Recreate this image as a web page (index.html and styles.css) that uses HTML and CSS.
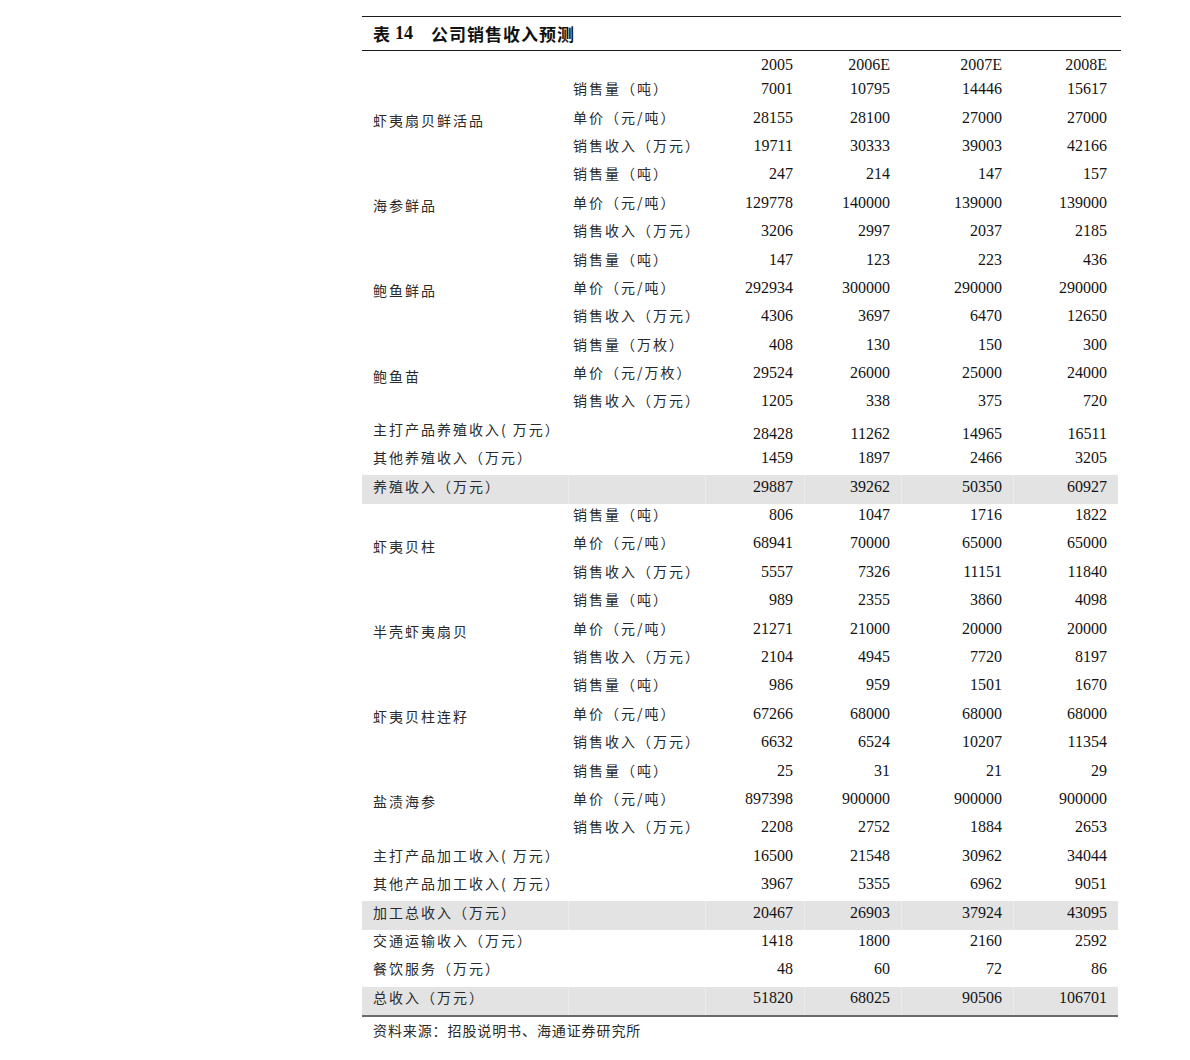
FILE: index.html
```html
<!DOCTYPE html>
<html lang="zh">
<head>
<meta charset="utf-8">
<title>表14 公司销售收入预测</title>
<link rel="stylesheet" href="styles.css">
</head>
<body>
<div class="page">
  <div class="title"><span class="t-cn">表</span><span class="t-num">14</span><span class="t-cn t-main">公司销售收入预测</span></div>
  <div class="grid">
    <div class="c hd"></div><div class="c hd"></div>
    <div class="c n hd">2005</div><div class="c n hd">2006E</div><div class="c n hd">2007E</div><div class="c n hd">2008E</div>

    <div class="c g">虾夷扇贝鲜活品</div>
    <div class="c l2">销售量（吨）</div><div class="c n">7001</div><div class="c n">10795</div><div class="c n">14446</div><div class="c n">15617</div>
    <div class="c l2">单价（元/吨）</div><div class="c n">28155</div><div class="c n">28100</div><div class="c n">27000</div><div class="c n">27000</div>
    <div class="c l2">销售收入（万元）</div><div class="c n">19711</div><div class="c n">30333</div><div class="c n">39003</div><div class="c n">42166</div>

    <div class="c g">海参鲜品</div>
    <div class="c l2">销售量（吨）</div><div class="c n">247</div><div class="c n">214</div><div class="c n">147</div><div class="c n">157</div>
    <div class="c l2">单价（元/吨）</div><div class="c n">129778</div><div class="c n">140000</div><div class="c n">139000</div><div class="c n">139000</div>
    <div class="c l2">销售收入（万元）</div><div class="c n">3206</div><div class="c n">2997</div><div class="c n">2037</div><div class="c n">2185</div>

    <div class="c g">鲍鱼鲜品</div>
    <div class="c l2">销售量（吨）</div><div class="c n">147</div><div class="c n">123</div><div class="c n">223</div><div class="c n">436</div>
    <div class="c l2">单价（元/吨）</div><div class="c n">292934</div><div class="c n">300000</div><div class="c n">290000</div><div class="c n">290000</div>
    <div class="c l2">销售收入（万元）</div><div class="c n">4306</div><div class="c n">3697</div><div class="c n">6470</div><div class="c n">12650</div>

    <div class="c g">鲍鱼苗</div>
    <div class="c l2">销售量（万枚）</div><div class="c n">408</div><div class="c n">130</div><div class="c n">150</div><div class="c n">300</div>
    <div class="c l2">单价（元/万枚）</div><div class="c n">29524</div><div class="c n">26000</div><div class="c n">25000</div><div class="c n">24000</div>
    <div class="c l2">销售收入（万元）</div><div class="c n">1205</div><div class="c n">338</div><div class="c n">375</div><div class="c n">720</div>

    <div class="c l1">主打产品养殖收入( 万元）</div><div class="c"></div><div class="c n low">28428</div><div class="c n low">11262</div><div class="c n low">14965</div><div class="c n low">16511</div>
    <div class="c l1">其他养殖收入（万元）</div><div class="c"></div><div class="c n">1459</div><div class="c n">1897</div><div class="c n">2466</div><div class="c n">3205</div>
    <div class="c l1 sh">养殖收入（万元）</div><div class="c sh box"></div><div class="c n sh box">29887</div><div class="c n sh box">39262</div><div class="c n sh box">50350</div><div class="c n sh box">60927</div>

    <div class="c g">虾夷贝柱</div>
    <div class="c l2">销售量（吨）</div><div class="c n">806</div><div class="c n">1047</div><div class="c n">1716</div><div class="c n">1822</div>
    <div class="c l2">单价（元/吨）</div><div class="c n">68941</div><div class="c n">70000</div><div class="c n">65000</div><div class="c n">65000</div>
    <div class="c l2">销售收入（万元）</div><div class="c n">5557</div><div class="c n">7326</div><div class="c n">11151</div><div class="c n">11840</div>

    <div class="c g">半壳虾夷扇贝</div>
    <div class="c l2">销售量（吨）</div><div class="c n">989</div><div class="c n">2355</div><div class="c n">3860</div><div class="c n">4098</div>
    <div class="c l2">单价（元/吨）</div><div class="c n">21271</div><div class="c n">21000</div><div class="c n">20000</div><div class="c n">20000</div>
    <div class="c l2">销售收入（万元）</div><div class="c n">2104</div><div class="c n">4945</div><div class="c n">7720</div><div class="c n">8197</div>

    <div class="c g">虾夷贝柱连籽</div>
    <div class="c l2">销售量（吨）</div><div class="c n">986</div><div class="c n">959</div><div class="c n">1501</div><div class="c n">1670</div>
    <div class="c l2">单价（元/吨）</div><div class="c n">67266</div><div class="c n">68000</div><div class="c n">68000</div><div class="c n">68000</div>
    <div class="c l2">销售收入（万元）</div><div class="c n">6632</div><div class="c n">6524</div><div class="c n">10207</div><div class="c n">11354</div>

    <div class="c g">盐渍海参</div>
    <div class="c l2">销售量（吨）</div><div class="c n">25</div><div class="c n">31</div><div class="c n">21</div><div class="c n">29</div>
    <div class="c l2">单价（元/吨）</div><div class="c n">897398</div><div class="c n">900000</div><div class="c n">900000</div><div class="c n">900000</div>
    <div class="c l2">销售收入（万元）</div><div class="c n">2208</div><div class="c n">2752</div><div class="c n">1884</div><div class="c n">2653</div>

    <div class="c l1">主打产品加工收入( 万元）</div><div class="c"></div><div class="c n">16500</div><div class="c n">21548</div><div class="c n">30962</div><div class="c n">34044</div>
    <div class="c l1">其他产品加工收入( 万元）</div><div class="c"></div><div class="c n">3967</div><div class="c n">5355</div><div class="c n">6962</div><div class="c n">9051</div>
    <div class="c l1 sh">加工总收入（万元）</div><div class="c sh box"></div><div class="c n sh box">20467</div><div class="c n sh box">26903</div><div class="c n sh box">37924</div><div class="c n sh box">43095</div>
    <div class="c l1">交通运输收入（万元）</div><div class="c"></div><div class="c n">1418</div><div class="c n">1800</div><div class="c n">2160</div><div class="c n">2592</div>
    <div class="c l1">餐饮服务（万元）</div><div class="c"></div><div class="c n">48</div><div class="c n">60</div><div class="c n">72</div><div class="c n">86</div>
    <div class="c l1 sh">总收入（万元）</div><div class="c sh box"></div><div class="c n sh box">51820</div><div class="c n sh box">68025</div><div class="c n sh box">90506</div><div class="c n sh box">106701</div>
  </div>
  <div class="source">资料来源：招股说明书、海通证券研究所</div>
</div>
</body>
</html>
```

FILE: styles.css
```css
html, body {
  margin: 0;
  padding: 0;
  background: #ffffff;
}

.page {
  margin-left: 362px;
  padding-top: 16px;
  width: 759px;
}

.title {
  height: 33px;
  border-top: 1px solid #1a1a1a;
  border-bottom: 1px solid #1a1a1a;
  display: flex;
  align-items: center;
  padding-left: 11px;
  color: #111;
  font-weight: bold;
}

.t-cn {
  font-family: "Noto Sans CJK SC", sans-serif;
  font-size: 17px;
  letter-spacing: 1px;
}

.t-num {
  font-family: "Liberation Serif", serif;
  font-size: 18px;
  margin-left: 4px;
}

.t-main {
  margin-left: 18px;
}

.grid {
  width: 756px;
  display: grid;
  grid-template-columns: 206px 137px 99px 97px 112px 105px;
  grid-template-rows: 27px;
  grid-auto-rows: 28.4px;
  border-bottom: 2px solid #6a6a6a;
}

.c {
  display: flex;
  align-items: center;
  padding-bottom: 6px;
  box-sizing: border-box;
  min-width: 0;
  white-space: nowrap;
}

.hd {
  padding-bottom: 0;
  padding-top: 1px;
}

.n {
  justify-content: flex-end;
  padding-right: 11px;
  font-family: "Liberation Serif", serif;
  font-size: 16px;
  color: #141414;
}

.g, .l1, .l2 {
  font-family: "Noto Sans CJK SC", sans-serif;
  font-size: 14px;
  letter-spacing: 2px;
  color: #2a2a2a;
}

.l1, .l2 {
  padding-bottom: 8px;
}

.g {
  grid-column: 1;
  grid-row: span 3;
  padding-left: 11px;
  padding-bottom: 1px;
}

.l1 {
  grid-column: 1;
  padding-left: 11px;
}

.l2 {
  padding-left: 5px;
}

.low {
  padding-bottom: 0;
  padding-top: 2px;
}

.sh {
  background: #e3e3e3;
}

.box {
  box-shadow: inset 3px 2px 0 -2px #ececec;
}

.source {
  margin-top: 3px;
  padding-left: 11px;
  line-height: 20px;
  font-family: "Noto Sans CJK SC", sans-serif;
  font-size: 14px;
  letter-spacing: 0.9px;
  color: #2a2a2a;
}
```
